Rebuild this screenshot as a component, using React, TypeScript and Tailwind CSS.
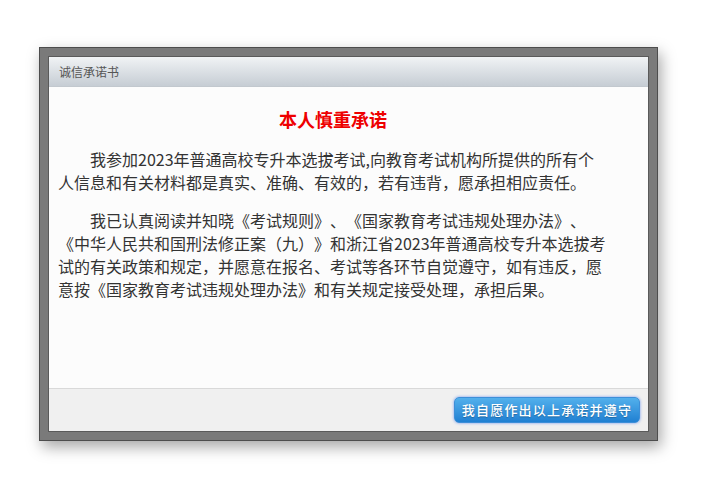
import React from 'react';

export default function App() {
  const cjk = { fontFamily: '"Noto Sans CJK SC", "Liberation Sans", sans-serif' };

  return (
    <div className="min-h-screen bg-white pt-[47px] pl-[39px] [text-spacing-trim:space-all]" style={cjk}>
      {/* Modal frame */}
      <div className="w-[619px] h-[394px] bg-[#7a7a7a] border border-[#4d4d4d] p-[8px] shadow-[3px_6px_14px_rgba(0,0,0,0.35)]">
        <div className="h-full flex flex-col bg-[#fcfcfc] border border-[#5a5a5a]">
          {/* Title bar */}
          <div className="h-[30px] flex items-center pl-[10px] bg-gradient-to-b from-[#f1f3f5] to-[#c6cdd4] border-b border-[#c2c8ce]">
            <span className="text-[12px] text-[#555]">诚信承诺书</span>
          </div>

          {/* Body */}
          <div className="flex-1 pl-[9px] pt-[19px]">
            <div className="w-[550px] text-[#333] text-[16px] leading-[23px]">
              <h2 className="text-center text-[18px] leading-[26px] font-bold text-[#ee0000] mb-[16px]">本人慎重承诺</h2>
              <p className="indent-[2em] mb-[15px]">
                我参加2023年普通高校专升本选拔考试,向教育考试机构所提供的所有个人信息和有关材料都是真实、准确、有效的，若有违背，愿承担相应责任。
              </p>
              <p className="indent-[2em]">
                我已认真阅读并知晓《考试规则》、《国家教育考试违规处理办法》、《中华人民共和国刑法修正案（九）》和浙江省2023年普通高校专升本选拔考试的有关政策和规定，并愿意在报名、考试等各环节自觉遵守，如有违反，愿意按《国家教育考试违规处理办法》和有关规定接受处理，承担后果。
              </p>
            </div>
          </div>

          {/* Footer */}
          <div className="h-[43px] flex items-center justify-end pr-[8px] bg-[#f0f0f0] border-t border-[#d9d9d9]">
            <button className="h-[26px] w-[186px] rounded-[5px] border border-[#3d8fd8] bg-gradient-to-b from-[#52b0ec] to-[#1f80d2] text-white text-[13px] font-medium tracking-[1.2px] shadow-[0_0_3px_rgba(80,130,240,0.8)] [text-shadow:0_1px_1px_rgba(0,0,0,0.25)]">
              我自愿作出以上承诺并遵守
            </button>
          </div>
        </div>
      </div>
    </div>
  );
}
